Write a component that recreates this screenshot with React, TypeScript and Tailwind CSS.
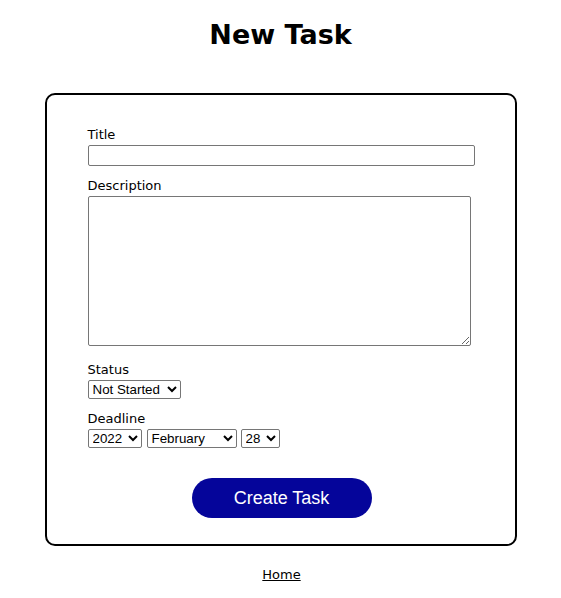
import React from "react";

export default function App() {
  const font = { fontFamily: '"DejaVu Sans", Verdana, sans-serif' };
  const arial = { fontFamily: '"Liberation Sans", Arial, sans-serif' };
  return (
    <div className="min-h-[598px] w-full bg-white text-black" style={font}>
      <h1 className="pt-[18px] text-center text-[27px] font-bold leading-[33px]">New Task</h1>
      <div className="mx-auto mt-[42px] w-[472px] rounded-[10px] border-2 border-black pl-[41px] pr-10 pt-[32px] pb-[26px]">
        <label className="block text-[13px] leading-[16px]">Title</label>
        <input
          type="text"
          className="mt-[2px] block h-[21px] w-[387px] rounded-[2px] border border-[#767676] bg-white px-1"
        />
        <label className="mt-[12px] block text-[13px] leading-[16px]">Description</label>
        <textarea
          className="mt-[2px] block h-[150px] w-[383px] resize rounded-[2px] border border-[#767676] bg-white p-1"
        />
        <label className="mt-[16px] block text-[13px] leading-[16px]">Status</label>
        <select
          className="mt-[2px] block h-[19px] w-[93px] rounded-[2px] border border-[#767676] bg-white text-[13.33px]"
          style={arial}
          defaultValue="Not Started"
        >
          <option>Not Started</option>
          <option>In Progress</option>
          <option>Completed</option>
        </select>
        <label className="mt-[12px] block text-[13px] leading-[16px]">Deadline</label>
        <div className="mt-[2px] flex gap-[5px] text-[13.33px]" style={arial}>
          <select
            className="h-[19px] w-[54px] rounded-[2px] border border-[#767676] bg-white"
            defaultValue="2022"
          >
            <option>2021</option>
            <option>2022</option>
            <option>2023</option>
          </select>
          <select
            className="h-[19px] w-[90px] rounded-[2px] border border-[#767676] bg-white"
            defaultValue="February"
          >
            <option>January</option>
            <option>February</option>
            <option>March</option>
          </select>
          <select
            className="-ml-[1px] h-[19px] w-[39px] rounded-[2px] border border-[#767676] bg-white"
            defaultValue="28"
          >
            <option>27</option>
            <option>28</option>
          </select>
        </div>
        <div className="mt-[30px] flex justify-center pl-[1px]">
          <button
            className="h-[40px] w-[180px] rounded-full bg-[#05059a] text-[18px] text-white"
            style={arial}
          >
            Create Task
          </button>
        </div>
      </div>
      <div className="mt-[16px] pl-[2px] text-center">
        <a href="#" className="text-[13px] leading-[16px] text-black underline">Home</a>
      </div>
    </div>
  );
}
